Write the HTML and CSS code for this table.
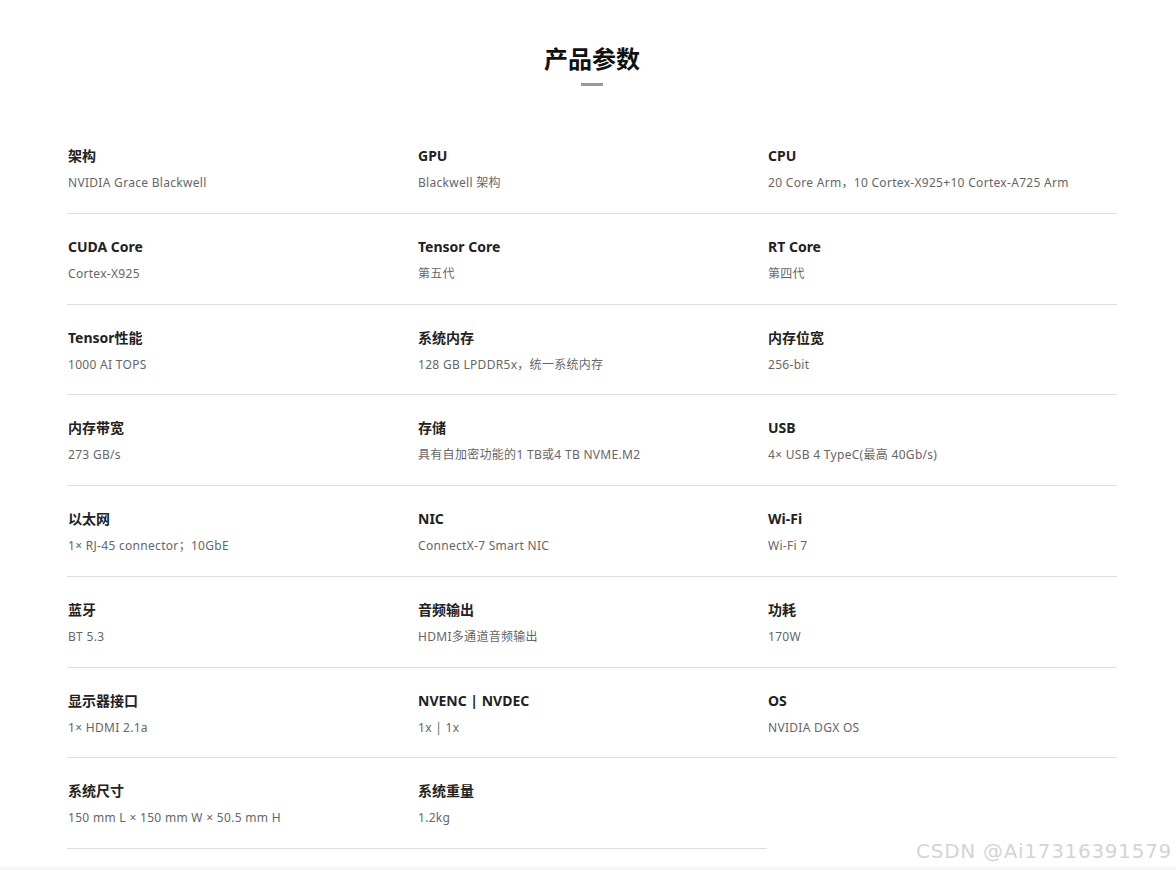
FILE: index.html
```html
<!DOCTYPE html>
<html lang="zh-CN">
<head>
<meta charset="utf-8">
<title>产品参数</title>
<link rel="stylesheet" href="styles.css">
</head>
<body>
<div class="page">
  <section class="specs">
    <h2 class="title">产品参数</h2>
    <div class="title-bar"></div>
    <div class="grid">
      <div class="cell"><div class="label">架构</div><div class="value">NVIDIA Grace Blackwell</div></div>
      <div class="cell"><div class="label">GPU</div><div class="value">Blackwell 架构</div></div>
      <div class="cell"><div class="label">CPU</div><div class="value">20 Core Arm，10 Cortex-X925+10 Cortex-A725 Arm</div></div>

      <div class="cell"><div class="label">CUDA Core</div><div class="value">Cortex-X925</div></div>
      <div class="cell"><div class="label">Tensor Core</div><div class="value">第五代</div></div>
      <div class="cell"><div class="label">RT Core</div><div class="value">第四代</div></div>

      <div class="cell"><div class="label">Tensor性能</div><div class="value">1000 AI TOPS</div></div>
      <div class="cell"><div class="label">系统内存</div><div class="value">128 GB LPDDR5x，统一系统内存</div></div>
      <div class="cell"><div class="label">内存位宽</div><div class="value">256-bit</div></div>

      <div class="cell"><div class="label">内存带宽</div><div class="value">273 GB/s</div></div>
      <div class="cell"><div class="label">存储</div><div class="value">具有自加密功能的1 TB或4 TB NVME.M2</div></div>
      <div class="cell"><div class="label">USB</div><div class="value">4× USB 4 TypeC(最高 40Gb/s)</div></div>

      <div class="cell"><div class="label">以太网</div><div class="value">1× RJ-45 connector；10GbE</div></div>
      <div class="cell"><div class="label">NIC</div><div class="value">ConnectX-7 Smart NIC</div></div>
      <div class="cell"><div class="label">Wi-Fi</div><div class="value">Wi-Fi 7</div></div>

      <div class="cell"><div class="label">蓝牙</div><div class="value">BT 5.3</div></div>
      <div class="cell"><div class="label">音频输出</div><div class="value">HDMI多通道音频输出</div></div>
      <div class="cell"><div class="label">功耗</div><div class="value">170W</div></div>

      <div class="cell"><div class="label">显示器接口</div><div class="value">1× HDMI 2.1a</div></div>
      <div class="cell"><div class="label">NVENC | NVDEC</div><div class="value">1x | 1x</div></div>
      <div class="cell"><div class="label">OS</div><div class="value">NVIDIA DGX OS</div></div>

      <div class="cell"><div class="label">系统尺寸</div><div class="value">150 mm L × 150 mm W × 50.5 mm H</div></div>
      <div class="cell"><div class="label">系统重量</div><div class="value">1.2kg</div></div>
    </div>
  </section>
  <div class="footer-strip"></div>
  <div class="watermark">CSDN @Ai17316391579</div>
</div>
</body>
</html>
```

FILE: styles.css
```css
* { box-sizing: border-box; }
html, body {
  margin: 0;
  padding: 0;
  background: #ffffff;
}
body {
  font-family: "Noto Sans", "Noto Sans CJK SC", sans-serif;
  color: #222;
  overflow: hidden;
}
.page {
  position: relative;
  width: 1176px;
  height: 870px;
}
.specs {
  width: 1050px;
  margin-left: 67px;
  padding-top: 40px;
  height: 867px;
}
.title {
  margin: 0;
  text-align: center;
  font-family: "Noto Sans CJK SC", sans-serif;
  font-size: 24px;
  line-height: 36px;
  font-weight: 700;
  color: #111;
}
.title-bar {
  width: 22px;
  height: 3px;
  background: #999;
  margin: 7px auto 0;
}
.grid {
  margin-top: 37px;
  display: grid;
  grid-template-columns: repeat(3, 350px);
}
.cell {
  height: 90.75px;
  border-bottom: 1px solid #dedede;
  padding-top: 23px;
  padding-left: 1px;
}
.label {
  font-size: 14px;
  line-height: 20px;
  font-weight: 700;
  color: #222;
}
.value {
  margin-top: 7px;
  font-size: 12px;
  line-height: 20px;
  letter-spacing: 0.3px;
  color: #666;
}
.footer-strip {
  height: 3px;
  background: #f5f6fa;
}
.watermark {
  position: absolute;
  right: 4px;
  bottom: 7px;
  font-family: "DejaVu Sans", sans-serif;
  font-size: 20px;
  letter-spacing: 0.7px;
  color: #d4d4d4;
  text-shadow: 0 0 1px #ffffff;
}
```
